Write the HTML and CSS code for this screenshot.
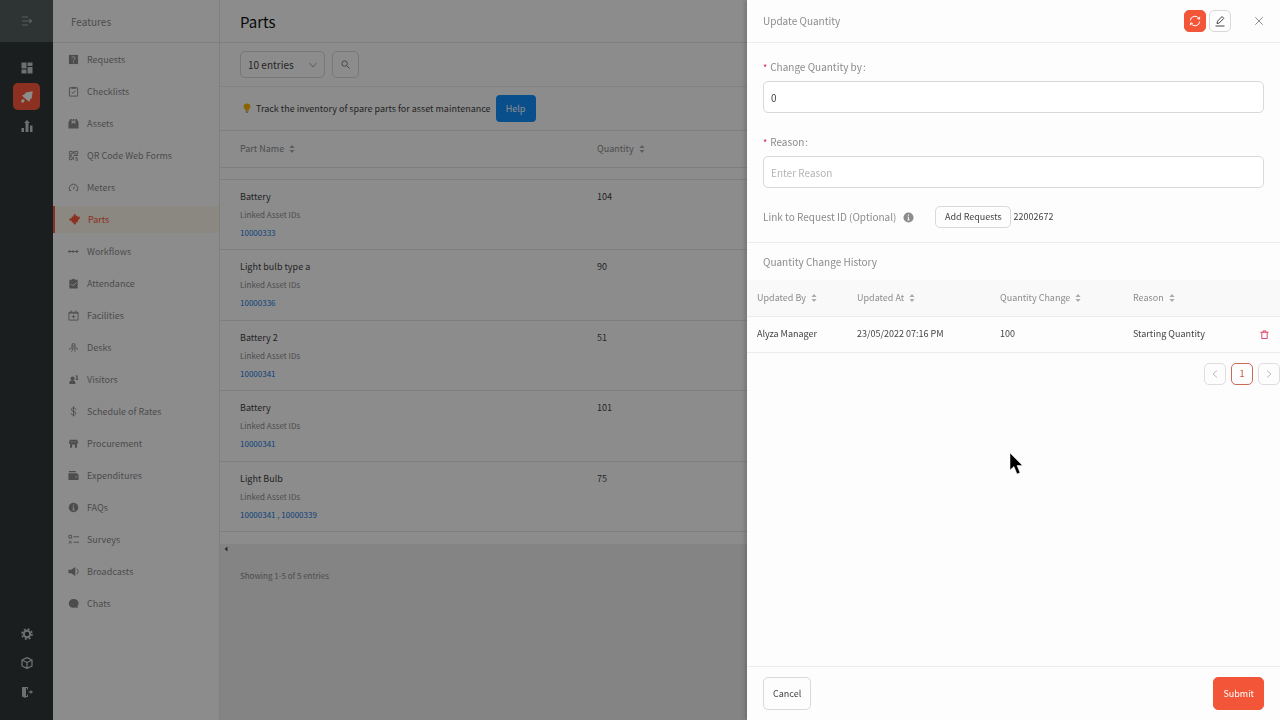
FILE: index.html
```
<!DOCTYPE html>
<html lang="en">
<head>
    <meta charset="UTF-8">
    <title>Parts</title>
    <link rel="stylesheet" href="styles.css">
</head>
<body>
<!-- shared icons -->
<svg class="defs" aria-hidden="true">
    <symbol id="sort" viewBox="0 0 6 10">
        <path d="M3 1L5.600 4H.4zM3 9L.4 6h5.200z" fill="currentColor"/>
    </symbol>
</svg>

<div class="app">
    <nav class="rail">
        <button class="rail-toggle" aria-label="Expand menu">
            <svg viewBox="0 0 12 12"><path d="M1 2h6M1 6h9.500M1 10h6M8.500 4l2 2-2 2" fill="none" stroke="currentColor" stroke-width="1.200"/></svg>
        </button>
        <button class="rail-btn" aria-label="Dashboard">
            <svg viewBox="0 0 12 12"><path d="M.5.5h5v6h-5zM6.500.5h5v3.500h-5zM.5 7.500h5v4h-5zM6.500 5h5v6.500h-5z"/></svg>
        </button>
        <button class="rail-btn rail-active" aria-label="Features">
            <svg viewBox="0 0 12 12"><path d="M11.700.3L10.700 7.300 9.200 8.300 8.600 10.800 6.500 9.500 2.700 6.300 1 4.400 3.700 3.300 4.800 1.500zM.3 9.300l1.200-1 1.800.2.200 1.800-1 1.200L.4 11.500z"/></svg>
        </button>
        <button class="rail-btn" aria-label="Reports">
            <svg viewBox="0 0 12 12"><path d="M6 0l3 3H7.500v9h-3V3H3zM.5 8H3v4H.5zM9 5.500h2.500V12H9z"/></svg>
        </button>
        <div class="rail-space"></div>
        <button class="rail-btn" aria-label="Settings">
            <svg viewBox="0 0 12 12"><g fill="none" stroke="currentColor"><circle cx="6" cy="6" r="3.200" stroke-width="2"/><circle cx="6" cy="6" r="5" stroke-width="1.600" stroke-dasharray="2 1.927"/></g></svg>
        </button>
        <button class="rail-btn" aria-label="Products">
            <svg viewBox="0 0 12 12"><path d="M6 .7l5 2.300v6L6 11.400 1 9V3zM1 3l5 2.500L11 3M6 5.500v6" fill="none" stroke="currentColor" stroke-width="1.300" stroke-linejoin="round"/></svg>
        </button>
        <button class="rail-btn" aria-label="Log out">
            <svg viewBox="0 0 12 12"><path d="M1 1h6v2.500H6V2H5v8h1V8.500h1V11H5v1L1 10.500zM7.500 5.500h2V4L12 6 9.500 8V6.500h-2z"/></svg>
        </button>
    </nav>

    <aside class="sidebar">
        <h2 class="sidebar-title">Features</h2>
        <ul class="menu">
            <li><a href="#"><svg viewBox="0 0 12 12"><path d="M1 1h10v10H1z"/><path class="cut" d="M4.300 4.500c0-2.200 3.400-2.200 3.400 0C7.700 5.800 6 5.600 6 7.200M6 8.300v1.200"/></svg>Requests</a></li>
            <li><a href="#"><svg viewBox="0 0 12 12"><path class="line" d="M1.500 2h9v9h-9zM4 1.500h4v1H4zM4 6.500l1.500 1.500L8.300 5"/></svg>Checklists</a></li>
            <li><a href="#"><svg viewBox="0 0 12 12"><path d="M.5 4.500l2-3.500H4v5.500l2-1.500 2 1.500V1h1.500l2 3.500v7H.5zM5 1h2v3L6 3.300 5 4z"/></svg>Assets</a></li>
            <li><a href="#"><svg viewBox="0 0 12 12"><path class="line" d="M1.500 1.500h3v3h-3zM7.500 1.500h3v3h-3zM1.500 7.500h3v3h-3zM6 1v3M6 6h5M1 6h3M6 7.500v3M8 8h1v1.500h2M8 11h3"/></svg>QR Code Web Forms</a></li>
            <li><a href="#"><svg viewBox="0 0 12 12"><path class="line" d="M2 9.500a4.700 4.700 0 1 1 8 0M6 8l1-3M1.500 9.300h2M8.500 9.300h2"/></svg>Meters</a></li>
            <li class="menu-active"><a href="#"><svg viewBox="0 0 12 12"><path d="M3 2.800h2.200C3.800-.3 8.500-.5 7.500 2.300L9.500 1.800V4.200C12-.0 13 6.800 9.700 6.200V9H7.500c1.200 3-3.200 3.500-2.500.3H3V7.300C-.5 8.500-.5 3.500 3 5z"/></svg>Parts</a></li>
            <li><a href="#"><svg viewBox="0 0 12 12"><path class="line" d="M1 6h9"/><path d="M.3 4.800h2.400v2.400H.3zM4.500 5h2v2h-2zM9 4l2.700 2L9 8z"/></svg>Workflows</a></li>
            <li><a href="#"><svg viewBox="0 0 12 12"><path d="M1.500 2H4l2-1.500L8 2h2.500v9.500h-9z"/><path class="cut" d="M3.500 6.500l2 2L9 5"/></svg>Attendance</a></li>
            <li><a href="#"><svg viewBox="0 0 12 12"><path class="line" d="M1 2.500h10V11H1zM1 3.500h10M3.500.5v2M8.500.5v2M4 7.300h4M6 5.300v4"/></svg>Facilities</a></li>
            <li><a href="#"><svg viewBox="0 0 12 12"><path class="line" d="M4.500 4.500V2h3v2.500M3.500 4.500h5M1.500 8.500l1-2h7l1 2M5 7v1.500L3.500 10.500M7.500 7v3.500"/></svg>Desks</a></li>
            <li><a href="#"><svg viewBox="0 0 12 12"><circle cx="5" cy="5" r="2.200"/><path d="M1.500 11V9c0-3 6.500-3 6.500 0v2zM8 1.500h2.500v4H11v1H8.500V5.500H9v-3H8z"/></svg>Visitors</a></li>
            <li><a href="#"><svg viewBox="0 0 12 12"><path class="line" d="M8.500 4c0-2.500-5-2.500-5-.1C3.500 6.300 8.500 5.400 8.500 8c0 2.500-5.200 2.500-5.200-.2M6 .5v11"/></svg>Schedule of Rates</a></li>
            <li><a href="#"><svg viewBox="0 0 12 12"><path d="M2 2h8l1 3.200c0 1-1 1.300-1.300.8V10.500H7.500V7h-3v3.500H2.300V6C2 6.500 1 6.200 1 5.200z"/><path class="cut" d="M4.300 3.500V5M7.700 3.500V5"/></svg>Procurement</a></li>
            <li><a href="#"><svg viewBox="0 0 12 12"><path d="M1 1h7.500v1.500H1zM1 3.500h9.500V5h1v6H.5V3.500z"/><path class="cut" d="M8 7.500h2"/></svg>Expenditures</a></li>
            <li><a href="#"><svg viewBox="0 0 12 12"><circle cx="6" cy="6" r="5.200"/><path class="cut" d="M6 2.800v1.400M5 5.500h1v3M4.700 8.700h2.600"/></svg>FAQs</a></li>
            <li><a href="#"><svg viewBox="0 0 12 12"><path class="line" d="M1 1.500h3v3H1zM6 3h6M6 9h6M1 7.500l3 3M4 7.500l-3 3"/></svg>Surveys</a></li>
            <li><a href="#"><svg viewBox="0 0 12 12"><path d="M.5 4h3L8 1v10L3.500 8h-3z"/><path class="line" d="M9.500 3c2 1.500 2 4.500 0 6"/></svg>Broadcasts</a></li>
            <li><a href="#"><svg viewBox="0 0 12 12"><path d="M6 1c6 0 6.500 5.500 4.500 7.500V11L8 10.300C4 11.500.8 9.500.8 6 .8 3 3 1 6 1z"/></svg>Chats</a></li>
        </ul>
    </aside>

    <main class="main">
        <h1 class="main-title">Parts</h1>
        <div class="toolbar">
            <div class="select-wrap">
                <select class="entries" aria-label="Entries per page">
                    <option>10 entries</option>
                </select>
                <svg class="caret" viewBox="0 0 8 8"><path d="M.5 2L4 6l3.500-4" fill="none" stroke="currentColor"/></svg>
            </div>
            <button class="search" aria-label="Search">
                <svg viewBox="0 0 10 10"><path d="M6.500 6.500L9.500 9.500M7 4a3 3 0 1 1-6 0 3 3 0 0 1 6 0z" fill="none" stroke="currentColor"/></svg>
            </button>
        </div>
        <div class="tip">
            <svg viewBox="0 0 8 12"><path d="M4 .5c4.500 0 4.500 4.500 2 6.500L5.500 8.500h-3L2 7C-.5 5-.5.5 4 .5z" fill="#ffb400"/><path d="M2.500 9h3v1l-1 1h-1l-1-1z" fill="#b8a070"/></svg>
            <span>Track the inventory of spare parts for asset maintenance</span>
            <button class="help">Help</button>
        </div>
        <div class="parts-wrap">
            <table class="parts">
                <thead>
                <tr>
                    <th class="col-name">Part Name <svg class="sort"><use href="#sort"/></svg></th>
                    <th>Quantity <svg class="sort"><use href="#sort"/></svg></th>
                </tr>
                </thead>
                <tbody>
                <tr class="spacer"><td></td><td></td></tr>
                <tr>
                    <td>Battery<div class="linked">Linked Asset IDs</div><div class="ids"><a href="#">10000333</a></div></td>
                    <td>104</td>
                </tr>
                <tr>
                    <td>Light bulb type a<div class="linked">Linked Asset IDs</div><div class="ids"><a href="#">10000336</a></div></td>
                    <td>90</td>
                </tr>
                <tr>
                    <td>Battery 2<div class="linked">Linked Asset IDs</div><div class="ids"><a href="#">10000341</a></div></td>
                    <td>51</td>
                </tr>
                <tr>
                    <td>Battery<div class="linked">Linked Asset IDs</div><div class="ids"><a href="#">10000341</a></div></td>
                    <td>101</td>
                </tr>
                <tr>
                    <td>Light Bulb<div class="linked">Linked Asset IDs</div><div class="ids"><a href="#">10000341</a> , <a href="#">10000339</a></div></td>
                    <td>75</td>
                </tr>
                </tbody>
            </table>
        </div>
        <div class="scrollbar"><svg viewBox="0 0 4 6"><path d="M3.500.5v5L.5 3z"/></svg></div>
        <p class="showing">Showing 1-5 of 5 entries</p>
    </main>
</div>

<div class="mask"></div>

<section class="drawer">
    <header class="drawer-header">
        <h2>Update Quantity</h2>
        <button class="icon-btn icon-primary" aria-label="Refresh">
            <svg viewBox="0 0 12 12"><path d="M1.300 5.500a4.700 4.700 0 0 1 8.900-1.700M10.700 6.500a4.700 4.700 0 0 1-8.900 1.700M10.800 1.800L10.300 4.200 8.200 3.500M1.200 10.200L1.700 7.800 3.800 8.500" fill="none" stroke="currentColor"/></svg>
        </button>
        <button class="icon-btn" aria-label="Edit">
            <svg viewBox="0 0 12 12"><path d="M1.500 11h9M3 8.500l.5-2.300L8 1.500l1.800 1.800L5.200 8z" fill="none" stroke="currentColor"/></svg>
        </button>
        <button class="close" aria-label="Close">
            <svg viewBox="0 0 8 8"><path d="M.3.3l7.400 7.400M7.700.3L.3 7.700" fill="none" stroke="currentColor"/></svg>
        </button>
    </header>

    <div class="drawer-body">
        <form class="form" id="quantity-form">
            <label for="change"><span class="required">*</span>Change Quantity by<span class="colon">:</span></label>
            <input type="text" id="change" value="0">
            <label for="reason"><span class="required">*</span>Reason<span class="colon">:</span></label>
            <input type="text" id="reason" placeholder="Enter Reason">
            <div class="link-row">
                <span class="link-label">Link to Request ID (Optional)</span>
                <svg class="info" viewBox="0 0 12 12"><circle cx="6" cy="6" r="5.500" fill="#8c8c8c"/><path d="M6 2.800v1.400M5 5.500h1v3M4.700 8.700h2.600" fill="none" stroke="#fff"/></svg>
                <button type="button" class="add">Add Requests</button>
                <span>22002672</span>
            </div>
        </form>
        <h3 class="history-title">Quantity Change History</h3>
        <table class="history">
            <thead>
            <tr>
                <th class="col-by">Updated By <svg class="sort"><use href="#sort"/></svg></th>
                <th class="col-at">Updated At <svg class="sort"><use href="#sort"/></svg></th>
                <th class="col-change">Quantity Change <svg class="sort"><use href="#sort"/></svg></th>
                <th>Reason <svg class="sort"><use href="#sort"/></svg></th>
                <th class="col-delete"></th>
            </tr>
            </thead>
            <tbody>
            <tr>
                <td>Alyza Manager</td>
                <td>23/05/2022 07:16 PM</td>
                <td>100</td>
                <td>Starting Quantity</td>
                <td>
                    <button class="delete" aria-label="Delete">
                        <svg viewBox="0 0 10 10"><path d="M.5 2.500h9M2 2.500v7h6v-7M3.500 2.500v-1.500h3v1.500" fill="none" stroke="currentColor"/></svg>
                    </button>
                </td>
            </tr>
            </tbody>
        </table>
        <div class="pages">
            <button class="page" aria-label="Previous page" disabled><svg viewBox="0 0 8 8"><path d="M6 .5L2 4l4 3.500" fill="none" stroke="currentColor"/></svg></button>
            <button class="page page-active">1</button>
            <button class="page" aria-label="Next page" disabled><svg viewBox="0 0 8 8"><path d="M2 .5L6 4 2 7.500" fill="none" stroke="currentColor"/></svg></button>
        </div>
    </div>

    <footer class="drawer-footer">
        <button class="btn">Cancel</button>
        <button class="btn btn-primary" form="quantity-form">Submit</button>
    </footer>
</section>

<svg class="cursor" viewBox="0 0 14 24"><path d="M1 1v17l4-3.500L8 22l3-1.300L8 13.500h5.500z" stroke="#fff" stroke-width=".5"/></svg>
</body>
</html>
```
FILE: styles.css
```
*{
    margin: 0;
    padding: 0;
    box-sizing: border-box;
}
body{
    font-family: "Noto Sans CJK SC", "Noto Sans", sans-serif;
    font-size: 9px;
    line-height: 18px;
    color: #444;
    overflow: hidden;
}
button, input, select{
    font: inherit;
    color: inherit;
}
button{
    display: flex;
    align-items: center;
    justify-content: center;
    background: none;
    border: none;
}
h1, h2, h3, th{
    font-weight: normal;
}
a{
    text-decoration: none;
}
table{
    width: 100%;
    border-collapse: collapse;
    table-layout: fixed;
}
th, td{
    text-align: left;
}
.defs{
    display: block;
    width: 0;
    height: 0;
}
.sort{
    width: 6px;
    height: 10px;
    margin-left: 3px;
    vertical-align: middle;
    color: #aaa;
}

/* left rail */
.app{
    display: flex;
    height: 100vh;
}
.rail{
    display: flex;
    flex-direction: column;
    align-items: center;
    gap: 2px;
    width: 53px;
    padding-bottom: 15px;
    background-color: #323839;
    color: #c8cccd;
}
.rail-toggle{
    width: 100%;
    height: 42px;
    margin-bottom: 10px;
    background-color: #555d5e;
    color: #a5aaab;
}
.rail-btn{
    width: 27px;
    height: 27px;
    border-radius: 5px;
}
.rail svg{
    width: 12px;
    height: 12px;
    fill: currentColor;
}
.rail-active{
    background-color: #ff5a3c;
    color: #fff;
}
.rail-space{
    flex: 1;
}

/* features menu */
.sidebar{
    width: 167px;
    background-color: #fff;
    border-right: 1px solid #e8e8e8;
}
.sidebar-title{
    height: 43px;
    padding-left: 18px;
    border-bottom: 1px solid #e8e8e8;
    font-size: 10px;
    line-height: 43px;
    color: #8c8c8c;
}
.menu{
    display: flex;
    flex-direction: column;
    gap: 5px;
    padding-top: 3px;
    list-style: none;
}
.menu a{
    display: flex;
    align-items: center;
    gap: 8px;
    height: 27px;
    padding-left: 15px;
    color: #8c8c8c;
}
.menu svg{
    width: 11px;
    height: 11px;
    fill: currentColor;
}
.menu .line{
    fill: none;
    stroke: currentColor;
}
.menu .cut{
    fill: none;
    stroke: #fff;
}
.menu .menu-active a{
    border-left: 2px solid #ff5a3c;
    padding-left: 14px;
    background-color: #fcf7ea;
    color: #ff5a3c;
}

/* parts list */
.main{
    flex: 1;
    background-color: #f0f1f3;
}
.main-title{
    height: 43px;
    padding-left: 20px;
    background-color: #fff;
    border-bottom: 1px solid #e8e8e8;
    font-size: 15px;
    line-height: 43px;
    color: #111;
}
.toolbar{
    display: flex;
    align-items: center;
    gap: 7px;
    height: 44px;
    padding-left: 20px;
    background-color: #fff;
    border-bottom: 1px solid #eee;
}
.select-wrap{
    display: flex;
    align-items: center;
    width: 85px;
    height: 27px;
    border: 1px solid #d9d9d9;
    border-radius: 5px;
}
.entries{
    flex: 1;
    padding-left: 7px;
    border: none;
    background: none;
    appearance: none;
    font-size: 10px;
}
.caret{
    width: 8px;
    height: 8px;
    margin-right: 7px;
    color: #aaa;
}
.search{
    width: 27px;
    height: 27px;
    border: 1px solid #d9d9d9;
    border-radius: 5px;
    color: #777;
}
.search svg{
    width: 9px;
    height: 9px;
}
.tip{
    display: flex;
    align-items: center;
    height: 44px;
    padding-left: 23px;
    background-color: #fff;
    border-bottom: 1px solid #e8e8e8;
}
.tip svg{
    width: 8px;
    height: 11px;
    margin-right: 5px;
}
.help{
    width: 40px;
    height: 27px;
    margin-left: 5px;
    border-radius: 4px;
    background-color: #1290ff;
    color: #fff;
}
.parts-wrap{
    padding-bottom: 12px;
    background-color: #fff;
}
.parts th{
    height: 36px;
    padding-left: 10px;
    border-bottom: 1px solid #e8e8e8;
    color: #8c8c8c;
}
.parts .col-name{
    width: 367px;
}
.parts td{
    height: 71px;
    padding: 8px 0 7px 10px;
    border-bottom: 1px solid #e8e8e8;
    vertical-align: top;
}
.parts tr:nth-child(even) td{
    height: 70px;
}
.parts th:first-child, .parts td:first-child{
    padding-left: 20px;
}
.parts .spacer td{
    height: 12px;
    padding: 0;
}
.linked{
    font-size: 8px;
    color: #8c8c8c;
}
.ids, .ids a{
    font-size: 8px;
    color: #1677e0;
}
.scrollbar{
    display: flex;
    align-items: center;
    height: 11px;
    padding-left: 4px;
}
.scrollbar svg{
    width: 4px;
    height: 6px;
    fill: #505050;
}
.showing{
    padding: 12px 20px;
    font-size: 8px;
    color: #8c8c8c;
}
.mask{
    position: fixed;
    inset: 0;
    background-color: rgba(0,0,0,.45);
}

/* update quantity drawer */
.drawer{
    position: fixed;
    top: 0;
    right: 0;
    bottom: 0;
    display: flex;
    flex-direction: column;
    width: 533px;
    background-color: #fdfdfd;
    box-shadow: -2px 0 5px rgba(0,0,0,.2);
}
.drawer-header{
    display: flex;
    align-items: center;
    gap: 3px;
    height: 43px;
    padding: 0 16px;
    border-bottom: 1px solid #ececec;
    color: #8c8c8c;
}
.drawer-header h2{
    flex: 1;
    font-size: 10px;
}
.icon-btn{
    width: 22px;
    height: 22px;
    border: 1px solid #d9d9d9;
    border-radius: 5px;
    color: #444;
}
.icon-btn svg{
    width: 12px;
    height: 12px;
}
.icon-primary{
    border-color: #f25538;
    background-color: #f25538;
    color: #fff;
}
.close{
    width: 11px;
    height: 22px;
    margin-left: 19px;
}
.close svg{
    width: 8px;
    height: 8px;
}
.drawer-body{
    flex: 1;
}
.form{
    padding: 10px 16px 14px;
    border-bottom: 1px solid #ececec;
    font-size: 10px;
}
.form label{
    display: block;
    height: 28px;
    line-height: 28px;
    color: #8c8c8c;
}
.required{
    margin-right: 3px;
    color: #d0294f;
    font-size: 9px;
}
.colon{
    margin-left: 1px;
}
.form input{
    display: block;
    width: 100%;
    height: 32px;
    margin-bottom: 15px;
    padding: 0 7px;
    border: 1px solid #d9d9d9;
    border-radius: 5px;
    background-color: #fff;
}
.form input::placeholder{
    color: #b5b5b5;
}
.link-row{
    display: flex;
    align-items: center;
    font-size: 9px;
    margin-top: 18px;
}
.link-label{
    font-size: 10px;
    color: #8c8c8c;
}
.info{
    width: 11px;
    height: 11px;
    margin: 0 21px 0 7px;
}
.add{
    width: 76px;
    height: 22px;
    margin-right: 2px;
    border: 1px solid #d9d9d9;
    border-radius: 5px;
}
.history-title{
    height: 37px;
    padding-left: 16px;
    font-size: 10px;
    line-height: 37px;
    color: #8c8c8c;
}
.history th, .history td{
    height: 36px;
    padding-left: 10px;
    border-bottom: 1px solid #ececec;
}
.history th{
    background-color: #f9f9f9;
    color: #8c8c8c;
}
.history .col-by{
    width: 100px;
}
.history .col-at{
    width: 143px;
}
.history .col-change{
    width: 133px;
}
.history .col-delete{
    width: 31px;
}
.delete{
    width: 10px;
    color: #e0305a;
}
.delete svg{
    width: 9px;
    height: 9px;
}
.pages{
    display: flex;
    justify-content: flex-end;
    gap: 5px;
    padding-top: 10px;
}
.page{
    width: 22px;
    height: 22px;
    border: 1px solid #dedede;
    border-radius: 5px;
    color: #bbb;
}
.page svg{
    width: 8px;
    height: 8px;
}
.page-active{
    border-color: #c96a58;
    color: #c9523c;
}
.drawer-footer{
    display: flex;
    justify-content: space-between;
    padding: 10px 16px;
    border-top: 1px solid #ececec;
}
.btn{
    height: 33px;
    padding: 0 9px;
    border: 1px solid #d9d9d9;
    border-radius: 5px;
    font-size: 9px;
}
.btn-primary{
    border-color: #f25538;
    background-color: #f25538;
    color: #fff;
}

/* mouse pointer */
.cursor{
    position: fixed;
    left: 1009px;
    top: 451px;
    width: 14px;
    height: 26px;
}
```
